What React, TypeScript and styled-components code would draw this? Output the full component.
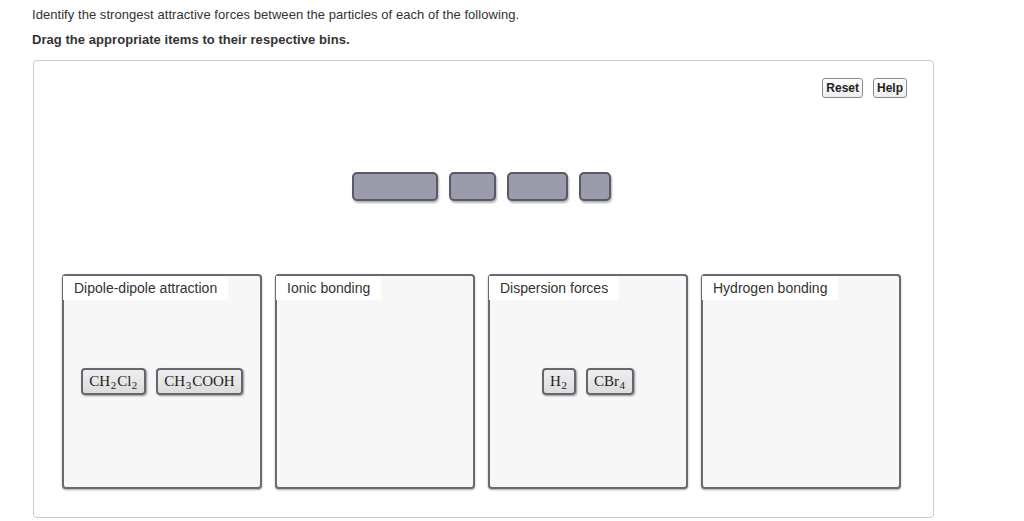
import * as React from 'react';
import styled, { createGlobalStyle } from 'styled-components';

const GlobalStyle = createGlobalStyle`
  body {
    margin: 0;
    background: #fff;
    font-family: 'Liberation Sans', Arial, Helvetica, sans-serif;
    color: #333;
  }
`;

const Page = styled.div`
  padding: 7px 0 0 32px;
`;

const Prompt = styled.p<{ bold?: boolean }>`
  margin: 0 0 9px;
  font-size: 13px;
  line-height: 16px;
  letter-spacing: 0.05px;
  font-weight: ${props => (props.bold ? 'bold' : 'normal')};
  color: #333;
`;

const Panel = styled.div`
  box-sizing: border-box;
  width: 901px;
  height: 458px;
  margin: 12px 0 0 1px;
  border: 1px solid #c9c9c9;
  border-radius: 4px;
  padding: 17px 26px 28px 28px;
  display: flex;
  flex-direction: column;
`;

const Toolbar = styled.div`
  display: flex;
  justify-content: flex-end;
  gap: 10px;
  height: 20px;
`;

const ToolButton = styled.button`
  box-sizing: border-box;
  height: 20px;
  padding: 0 3px;
  font-family: 'Liberation Sans', Arial, sans-serif;
  font-size: 12px;
  font-weight: bold;
  color: #222;
  background: linear-gradient(#ffffff, #eeeeee);
  border: 1px solid #8a8a8a;
  border-radius: 3px;
  cursor: pointer;
`;

const TileRow = styled.div`
  display: flex;
  justify-content: center;
  gap: 11px;
  margin-top: 74px;
  padding-right: 7px;
`;

const Tile = styled.div<{ width: number }>`
  box-sizing: border-box;
  width: ${props => props.width}px;
  height: 29px;
  background: #9a9cab;
  border: 2px solid #5a5a66;
  border-radius: 5px;
  box-shadow: 1px 2px 2px rgba(0, 0, 0, 0.3);
`;

const BinRow = styled.div`
  display: flex;
  gap: 13px;
  margin-top: 73px;
`;

const Bin = styled.div`
  box-sizing: border-box;
  width: 200px;
  height: 215px;
  background: #f7f7f7;
  border: 2px solid #6a6a74;
  border-radius: 4px;
  box-shadow: 0 1px 2px rgba(0, 0, 0, 0.35);
  display: flex;
  flex-direction: column;
  align-items: flex-start;
`;

const BinLabel = styled.div`
  height: 24px;
  line-height: 25px;
  padding: 0 11px;
  margin-left: -1px;
  background: #fff;
  font-size: 14px;
  color: #333;
`;

const ItemArea = styled.div`
  flex: 1;
  align-self: stretch;
  display: flex;
  align-items: center;
  justify-content: center;
  gap: 10px;
  padding-bottom: 24px;
`;

const Item = styled.div`
  box-sizing: border-box;
  height: 27px;
  padding: 0 6px;
  line-height: 23px;
  background: linear-gradient(#eeeeee, #dddddd);
  border: 2px solid #666670;
  border-radius: 4px;
  box-shadow: 1px 1px 2px rgba(0, 0, 0, 0.4);
  font-family: 'Liberation Serif', 'Times New Roman', serif;
  font-size: 15px;
  color: #222;
  white-space: nowrap;
`;

const Sub = styled.sub`
  font-size: 11px;
  vertical-align: -3px;
  line-height: 0;
  margin: 0 1px 0 0.5px;
`;

type Part = [string, string?];

const formula = (parts: Part[]) =>
  parts.map(([main, sub], i) => (
    <React.Fragment key={i}>
      {main}
      {sub && <Sub>{sub}</Sub>}
    </React.Fragment>
  ));

const bins: { label: string; items: Part[][] }[] = [
  {
    label: 'Dipole-dipole attraction',
    items: [
      [['CH', '2'], ['Cl', '2']],
      [['CH', '3'], ['COOH']],
    ],
  },
  { label: 'Ionic bonding', items: [] },
  {
    label: 'Dispersion forces',
    items: [[['H', '2']], [['CBr', '4']]],
  },
  { label: 'Hydrogen bonding', items: [] },
];

const tileWidths = [86, 47, 61, 32];

export default function App() {
  return (
    <Page>
      <GlobalStyle />
      <Prompt>
        Identify the strongest attractive forces between the particles of each
        of the following.
      </Prompt>
      <Prompt bold>Drag the appropriate items to their respective bins.</Prompt>
      <Panel>
        <Toolbar>
          <ToolButton>Reset</ToolButton>
          <ToolButton>Help</ToolButton>
        </Toolbar>
        <TileRow>
          {tileWidths.map((w, i) => (
            <Tile key={i} width={w} />
          ))}
        </TileRow>
        <BinRow>
          {bins.map(bin => (
            <Bin key={bin.label}>
              <BinLabel>{bin.label}</BinLabel>
              <ItemArea>
                {bin.items.map((parts, i) => (
                  <Item key={i}>{formula(parts)}</Item>
                ))}
              </ItemArea>
            </Bin>
          ))}
        </BinRow>
      </Panel>
    </Page>
  );
}
